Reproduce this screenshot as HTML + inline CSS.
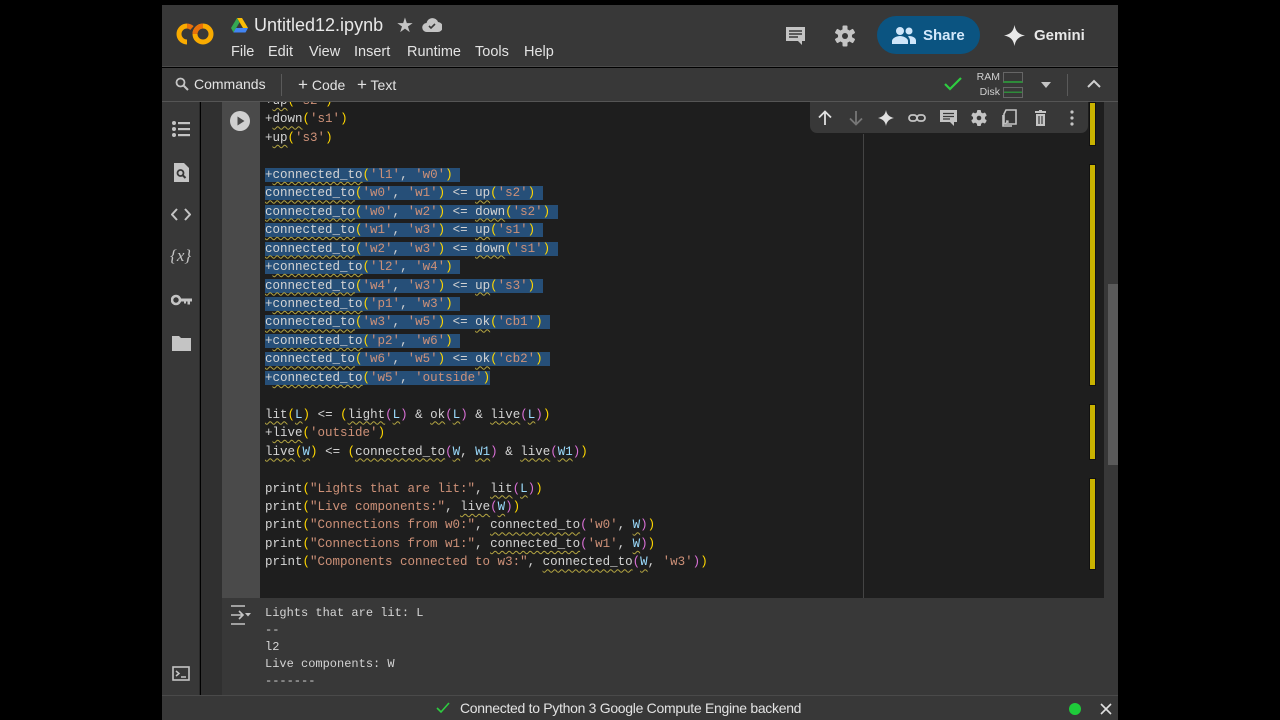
<!DOCTYPE html>
<html><head><meta charset="utf-8">
<style>
*{margin:0;padding:0;box-sizing:border-box}
body{width:1280px;height:720px;background:#000;position:relative;overflow:hidden;font-family:"Liberation Sans",sans-serif;color:#e3e3e3}
.a{position:absolute}
.code{font-family:"Liberation Mono",monospace;font-size:12.5px;line-height:18.45px;color:#d4d4d4;white-space:pre}
.s{color:#ce9178}.y{color:#ffd700}.p{color:#da70d6}.v{color:#9cdcfe}
.u{text-decoration:underline wavy #b5a642;text-underline-offset:3px;text-decoration-thickness:1px}
.sel{background:#264f78}
.out{font-family:"Liberation Mono",monospace;font-size:12px;line-height:17px;color:#d4d4d4;white-space:pre}
.ic{fill:#c4c4c4}
.m{position:absolute;top:44px;font-size:14.5px;color:#e3e3e3}
</style></head><body>
<div class="a" style="left:162px;top:5px;width:956px;height:62px;background:#383838;border-bottom:1px solid #4a4a4a"></div>
<svg class="a" style="left:174px;top:19px" width="42" height="30" viewBox="0 0 42 30">
<path d="M13 7a8 8 0 1 0 0 16" stroke="#f9ab00" stroke-width="5" fill="none"/>
<path d="M13 7a8 8 0 0 1 5 2" stroke="#e8710a" stroke-width="5" fill="none"/>
<circle cx="29" cy="15" r="8" stroke="#f9ab00" stroke-width="5" fill="none"/>
<path d="M21 15a8 8 0 0 1 8-8" stroke="#e8710a" stroke-width="5" fill="none"/>
</svg>
<svg class="a" style="left:231px;top:18px" width="17" height="15" viewBox="0 0 17 15"><path d="M6 0h5l6 10h-5z" fill="#fbbc04"/><path d="M6 0l-6 10 2.5 4.5 6-10z" fill="#34a853"/><path d="M2.5 14.5h12l2.5-4.5h-12z" fill="#4285f4"/></svg>
<div class="a" style="left:254px;top:15px;font-size:18px;color:#e8e8e8">Untitled12.ipynb</div>
<div class="a" style="left:396px;top:13px;font-size:20px;color:#c4c4c4">★</div>
<svg class="a" style="left:422px;top:17px" width="20" height="16" viewBox="0 0 20 16"><path d="M5 15a4.5 4.5 0 0 1-.5-9A6 6 0 0 1 16 5a4.5 4.5 0 0 1-.5 10z" fill="#c4c4c4"/><path d="M7 9l2 2 4-4" stroke="#383838" stroke-width="1.6" fill="none"/></svg>
<div class="m" style="left:231px">File</div>
<div class="m" style="left:268px">Edit</div>
<div class="m" style="left:309px">View</div>
<div class="m" style="left:354px">Insert</div>
<div class="m" style="left:407px">Runtime</div>
<div class="m" style="left:475px">Tools</div>
<div class="m" style="left:524px">Help</div>
<svg class="a" style="left:785px;top:26px" width="21" height="20" viewBox="0 0 21 20"><path d="M1 1h19v14h-3v4l-4-4H1z" class="ic"/><path d="M4 5h13M4 8h13M4 11h9" stroke="#383838" stroke-width="1.5"/></svg>
<svg class="a" style="left:834px;top:25px" width="22" height="22" viewBox="0 0 22 22"><g fill="#c4c4c4"><circle cx="11" cy="11" r="7"/><rect x="8.5" y="0.5" width="5" height="21" rx="1"/><rect x="8.5" y="0.5" width="5" height="21" rx="1" transform="rotate(60 11 11)"/><rect x="8.5" y="0.5" width="5" height="21" rx="1" transform="rotate(120 11 11)"/></g><circle cx="11" cy="11" r="3" fill="#383838"/></svg>
<div class="a" style="left:877px;top:16px;width:103px;height:38px;border-radius:19px;background:#0b5481"></div>
<svg class="a" style="left:892px;top:26px" width="25" height="18" viewBox="0 0 25 18"><circle cx="8" cy="5" r="4" fill="#cfe6fa"/><circle cx="17" cy="5" r="3.5" fill="#cfe6fa"/><path d="M0 18v-3c0-3 5-5 8-5s8 2 8 5v3z" fill="#cfe6fa"/><path d="M17 10c3 0 7 1.5 7 4.5V18h-6v-3c0-2-1-3.5-2-4.5z" fill="#cfe6fa"/></svg>
<div class="a" style="left:923px;top:27px;font-size:15px;color:#d3e8fb;font-weight:bold">Share</div>
<svg class="a" style="left:1004px;top:25px" width="21" height="21" viewBox="0 0 20 20"><path d="M10 0C11 6 14 9 20 10 14 11 11 14 10 20 9 14 6 11 0 10 6 9 9 6 10 0z" fill="#e8e8e8"/></svg>
<div class="a" style="left:1034px;top:27px;font-size:15px;color:#e8e8e8;font-weight:bold">Gemini</div>
<div class="a" style="left:162px;top:68px;width:956px;height:34px;background:#383838;border-bottom:1px solid #555"></div>
<svg class="a" style="left:175px;top:77px" width="14" height="14" viewBox="0 0 14 14"><circle cx="5.5" cy="5.5" r="4" stroke="#c4c4c4" stroke-width="1.8" fill="none"/><path d="M8.5 8.5l4.5 4.5" stroke="#c4c4c4" stroke-width="2"/></svg>
<div class="a" style="left:194px;top:76px;font-size:14px;color:#e3e3e3">Commands</div>
<div class="a" style="left:281px;top:74px;width:1px;height:22px;background:#5a5a5a"></div>
<div class="a" style="left:298px;top:75px;font-size:14px;color:#e3e3e3"><span style="font-size:17px">+</span> Code&nbsp;&nbsp;&nbsp;<span style="font-size:17px">+</span> Text</div>
<svg class="a" style="left:944px;top:77px" width="18" height="14" viewBox="0 0 18 14"><path d="M1 7l5 5L17 1" stroke="#2ecc40" stroke-width="2.2" fill="none"/></svg>
<div class="a" style="left:975px;top:70px;font-size:10.5px;color:#d0d0d0;line-height:15px;text-align:right;width:25px">RAM<br>Disk</div>
<div class="a" style="left:1003px;top:72px;width:20px;height:11px;border:1px solid #666;border-bottom:2px solid #2e8b3a"></div>
<div class="a" style="left:1003px;top:87px;width:20px;height:11px;border:1px solid #666;background:linear-gradient(#383838 40%,#2e8b3a 40%,#2e8b3a 55%,#383838 55%)"></div>
<div class="a" style="left:1041px;top:82px;border-left:5px solid transparent;border-right:5px solid transparent;border-top:6px solid #c4c4c4"></div>
<div class="a" style="left:1067px;top:74px;width:1px;height:22px;background:#5a5a5a"></div>
<svg class="a" style="left:1087px;top:79px" width="14" height="9" viewBox="0 0 14 9"><path d="M1 8l6-6 6 6" stroke="#d0d0d0" stroke-width="2" fill="none"/></svg>
<div class="a" style="left:162px;top:102px;width:38px;height:593px;background:#383838;border-right:1px solid #2a2a2a"></div>
<svg class="a" style="left:172px;top:121px" width="18" height="16" viewBox="0 0 18 16"><g class="ic"><circle cx="2" cy="2" r="2"/><circle cx="2" cy="8" r="2"/><circle cx="2" cy="14" r="2"/><rect x="6" y="1" width="12" height="2.2"/><rect x="6" y="7" width="12" height="2.2"/><rect x="6" y="13" width="12" height="2.2"/></g></svg>
<svg class="a" style="left:173px;top:163px" width="16" height="19" viewBox="0 0 16 19"><path d="M1 0h10l5 5v14H1z" class="ic"/><circle cx="7.5" cy="10" r="3" stroke="#383838" stroke-width="1.8" fill="none"/><path d="M9.5 12l3 3" stroke="#383838" stroke-width="2"/></svg>
<svg class="a" style="left:171px;top:208px" width="20" height="13" viewBox="0 0 20 13"><path d="M6 1L1 6.5 6 12M14 1l5 5.5-5 5.5" stroke="#c4c4c4" stroke-width="2" fill="none"/></svg>
<div class="a" style="left:170px;top:246px;font-family:'Liberation Serif',serif;font-size:17px;font-style:italic;color:#c4c4c4">{<i>x</i>}</div>
<svg class="a" style="left:171px;top:294px" width="21" height="12" viewBox="0 0 21 12"><circle cx="5" cy="6" r="4" stroke="#c4c4c4" stroke-width="2.6" fill="none"/><path d="M9 4.5h12v3h-2v3h-2.5v-3h-1.5v2h-2v-2h-4z" class="ic"/></svg>
<svg class="a" style="left:172px;top:335px" width="19" height="16" viewBox="0 0 19 16"><path d="M0 1h7l2 2h10v13H0z" class="ic"/></svg>
<svg class="a" style="left:172px;top:666px" width="18" height="15" viewBox="0 0 18 15"><rect x="1" y="1" width="16" height="13" stroke="#c4c4c4" stroke-width="1.6" fill="none"/><path d="M4 5l3 2.5L4 10M9 11h5" stroke="#c4c4c4" stroke-width="1.5" fill="none"/></svg>
<div class="a" style="left:201px;top:102px;width:903px;height:593px;background:#303030"></div>
<div class="a" style="left:222px;top:102px;width:38px;height:496px;background:#4a4a4a"></div>
<div class="a" style="left:260px;top:102px;width:844px;height:496px;background:#1e1e1e"></div>
<div class="a" style="left:863px;top:134px;width:1px;height:464px;background:#444"></div>
<svg class="a" style="left:230px;top:111px" width="20" height="20" viewBox="0 0 20 20"><circle cx="10" cy="10" r="10" fill="#d0d0d0"/><path d="M7.5 5.5v9l7-4.5z" fill="#4a4a4a"/></svg>
<div class="a" style="left:222px;top:598px;width:882px;height:97px;background:#383838"></div>
<div class="a" style="left:1089px;top:102px;width:7px;height:44px;background:#c9b200;border:1px solid #111"></div>
<div class="a" style="left:1089px;top:164px;width:7px;height:222px;background:#c9b200;border:1px solid #111"></div>
<div class="a" style="left:1089px;top:404px;width:7px;height:56px;background:#c9b200;border:1px solid #111"></div>
<div class="a" style="left:1089px;top:478px;width:7px;height:92px;background:#c9b200;border:1px solid #111"></div>
<div class="a" style="left:1104px;top:102px;width:14px;height:593px;background:#383838"></div>
<div class="a" style="left:1108px;top:284px;width:10px;height:181px;background:#5a5a5a"></div>
<div class="a" style="left:260px;top:102px;width:600px;height:496px;overflow:hidden">
<div class="a code" style="left:5px;top:-10px"><div>+<span class="u">up</span><span class="y">(</span><span class="s">'s2'</span><span class="y">)</span></div><div>+<span class="u">down</span><span class="y">(</span><span class="s">'s1'</span><span class="y">)</span></div><div>+<span class="u">up</span><span class="y">(</span><span class="s">'s3'</span><span class="y">)</span></div><div> </div><div><span class="sel">+<span class="u">connected_to</span><span class="y">(</span><span class="s">'l1'</span>, <span class="s">'w0'</span><span class="y">)</span> </span></div><div><span class="sel"><span class="u">connected_to</span><span class="y">(</span><span class="s">'w0'</span>, <span class="s">'w1'</span><span class="y">)</span> &lt;= <span class="u">up</span><span class="y">(</span><span class="s">'s2'</span><span class="y">)</span> </span></div><div><span class="sel"><span class="u">connected_to</span><span class="y">(</span><span class="s">'w0'</span>, <span class="s">'w2'</span><span class="y">)</span> &lt;= <span class="u">down</span><span class="y">(</span><span class="s">'s2'</span><span class="y">)</span> </span></div><div><span class="sel"><span class="u">connected_to</span><span class="y">(</span><span class="s">'w1'</span>, <span class="s">'w3'</span><span class="y">)</span> &lt;= <span class="u">up</span><span class="y">(</span><span class="s">'s1'</span><span class="y">)</span> </span></div><div><span class="sel"><span class="u">connected_to</span><span class="y">(</span><span class="s">'w2'</span>, <span class="s">'w3'</span><span class="y">)</span> &lt;= <span class="u">down</span><span class="y">(</span><span class="s">'s1'</span><span class="y">)</span> </span></div><div><span class="sel">+<span class="u">connected_to</span><span class="y">(</span><span class="s">'l2'</span>, <span class="s">'w4'</span><span class="y">)</span> </span></div><div><span class="sel"><span class="u">connected_to</span><span class="y">(</span><span class="s">'w4'</span>, <span class="s">'w3'</span><span class="y">)</span> &lt;= <span class="u">up</span><span class="y">(</span><span class="s">'s3'</span><span class="y">)</span> </span></div><div><span class="sel">+<span class="u">connected_to</span><span class="y">(</span><span class="s">'p1'</span>, <span class="s">'w3'</span><span class="y">)</span> </span></div><div><span class="sel"><span class="u">connected_to</span><span class="y">(</span><span class="s">'w3'</span>, <span class="s">'w5'</span><span class="y">)</span> &lt;= <span class="u">ok</span><span class="y">(</span><span class="s">'cb1'</span><span class="y">)</span> </span></div><div><span class="sel">+<span class="u">connected_to</span><span class="y">(</span><span class="s">'p2'</span>, <span class="s">'w6'</span><span class="y">)</span> </span></div><div><span class="sel"><span class="u">connected_to</span><span class="y">(</span><span class="s">'w6'</span>, <span class="s">'w5'</span><span class="y">)</span> &lt;= <span class="u">ok</span><span class="y">(</span><span class="s">'cb2'</span><span class="y">)</span> </span></div><div><span class="sel">+<span class="u">connected_to</span><span class="y">(</span><span class="s">'w5'</span>, <span class="s">'outside'</span><span class="y">)</span></span></div><div> </div><div><span class="u">lit</span><span class="y">(</span><span class="v u">L</span><span class="y">)</span> &lt;= <span class="y">(</span><span class="u">light</span><span class="p">(</span><span class="v u">L</span><span class="p">)</span> &amp; <span class="u">ok</span><span class="p">(</span><span class="v u">L</span><span class="p">)</span> &amp; <span class="u">live</span><span class="p">(</span><span class="v u">L</span><span class="p">)</span><span class="y">)</span></div><div>+<span class="u">live</span><span class="y">(</span><span class="s">'outside'</span><span class="y">)</span></div><div><span class="u">live</span><span class="y">(</span><span class="v u">W</span><span class="y">)</span> &lt;= <span class="y">(</span><span class="u">connected_to</span><span class="p">(</span><span class="v u">W</span>, <span class="v u">W1</span><span class="p">)</span> &amp; <span class="u">live</span><span class="p">(</span><span class="v u">W1</span><span class="p">)</span><span class="y">)</span></div><div> </div><div>print<span class="y">(</span><span class="s">"Lights that are lit:"</span>, <span class="u">lit</span><span class="p">(</span><span class="v u">L</span><span class="p">)</span><span class="y">)</span></div><div>print<span class="y">(</span><span class="s">"Live components:"</span>, <span class="u">live</span><span class="p">(</span><span class="v u">W</span><span class="p">)</span><span class="y">)</span></div><div>print<span class="y">(</span><span class="s">"Connections from w0:"</span>, <span class="u">connected_to</span><span class="p">(</span><span class="s">'w0'</span>, <span class="v u">W</span><span class="p">)</span><span class="y">)</span></div><div>print<span class="y">(</span><span class="s">"Connections from w1:"</span>, <span class="u">connected_to</span><span class="p">(</span><span class="s">'w1'</span>, <span class="v u">W</span><span class="p">)</span><span class="y">)</span></div><div>print<span class="y">(</span><span class="s">"Components connected to w3:"</span>, <span class="u">connected_to</span><span class="p">(</span><span class="v u">W</span>, <span class="s">'w3'</span><span class="p">)</span><span class="y">)</span></div></div>
</div>
<div class="a" style="left:810px;top:102px;width:278px;height:31px;background:#383838;border-radius:0 0 7px 7px"></div>
<svg class="a" style="left:817px;top:109px" width="264" height="18" viewBox="0 0 264 18">
<path d="M8 16V3M2 8.5l6-6 6 6" stroke="#e0e0e0" stroke-width="1.8" fill="none"/>
<path d="M39 2v13M33 9.5l6 6 6-6" stroke="#777" stroke-width="1.8" fill="none"/>
<path d="M69 1c.8 4.5 3 6.8 8 8-5 1.2-7.2 3.5-8 8-.8-4.5-3-6.8-8-8 5-1.2 7.2-3.5 8-8z" fill="#e0e0e0"/>
<rect x="92" y="6" width="8" height="6" rx="3" stroke="#c4c4c4" stroke-width="1.8" fill="none"/><rect x="100" y="6" width="8" height="6" rx="3" stroke="#c4c4c4" stroke-width="1.8" fill="none"/>
<path d="M123 1h17v12h-3v4l-4-4h-10z" class="ic"/><path d="M126 4.5h11M126 7.5h11M126 10h7" stroke="#383838" stroke-width="1.3"/>
<g fill="#c4c4c4"><circle cx="162" cy="9" r="6"/><rect x="160" y="1" width="4" height="16" rx="1"/><rect x="160" y="1" width="4" height="16" rx="1" transform="rotate(60 162 9)"/><rect x="160" y="1" width="4" height="16" rx="1" transform="rotate(120 162 9)"/></g><circle cx="162" cy="9" r="2.3" fill="#383838"/>
<path d="M189 1h10v14h-12V5z" stroke="#c4c4c4" stroke-width="1.6" fill="none"/><path d="M186 6v11h9" stroke="#c4c4c4" stroke-width="1.6" fill="none"/><path d="M188 15l3-3M189 12h2v2" stroke="#c4c4c4" stroke-width="1.2" fill="none"/>
<path d="M218 3h11M222 3V1h3v2M219 5h9v12h-9z" class="ic"/><path d="M222 7v8M225 7v8" stroke="#383838" stroke-width="1.2"/><rect x="218" y="2" width="11" height="2" class="ic"/>
<circle cx="255" cy="3" r="1.6" class="ic"/><circle cx="255" cy="9" r="1.6" class="ic"/><circle cx="255" cy="15" r="1.6" class="ic"/>
</svg>
<svg class="a" style="left:230px;top:605px" width="22" height="20" viewBox="0 0 22 20"><path d="M1 1h14M1 19h14M1 10h11M9 6l4 4-4 4" stroke="#c4c4c4" stroke-width="1.6" fill="none"/><path d="M15 8h6l-3 3.5z" fill="#c4c4c4"/></svg>
<div class="a out" style="left:265px;top:605px">Lights that are lit: L
--
l2
Live components: W
-------</div>
<div class="a" style="left:162px;top:695px;width:956px;height:25px;background:#383838;border-top:1px solid #4a4a4a"></div>
<svg class="a" style="left:436px;top:702px" width="14" height="12" viewBox="0 0 14 12"><path d="M1 6l4 4 8-9" stroke="#2ecc40" stroke-width="1.6" fill="none"/></svg>
<div class="a" style="left:460px;top:700px;font-size:14px;color:#e3e3e3;letter-spacing:-0.3px">Connected to Python 3 Google Compute Engine backend</div>
<div class="a" style="left:1069px;top:703px;width:12px;height:12px;border-radius:6px;background:#1ecb3a"></div>
<svg class="a" style="left:1100px;top:703px" width="12" height="12" viewBox="0 0 12 12"><path d="M1 1l10 10M11 1L1 11" stroke="#e0e0e0" stroke-width="1.6"/></svg>
</body></html>
